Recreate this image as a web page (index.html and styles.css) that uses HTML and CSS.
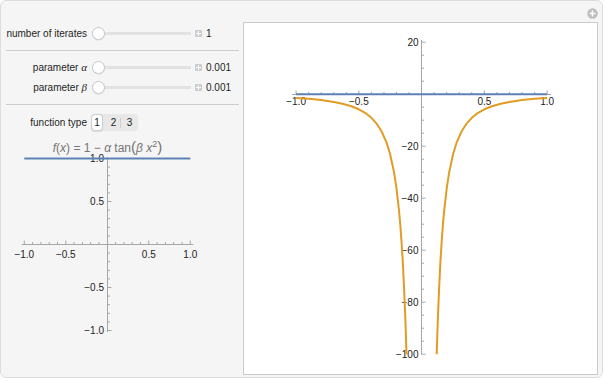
FILE: index.html
```html
<!DOCTYPE html>
<html>
<head>
<meta charset="utf-8">
<link rel="stylesheet" href="styles.css">
</head>
<body>
<div class="panel">
  <svg class="corner-plus" width="11" height="11" viewBox="0 0 11 11"><circle cx="5.5" cy="5.5" r="5.2" fill="#bdbdbd"/><path d="M5.5 2.5v6M2.5 5.5h6" stroke="#fff" stroke-width="1.6"/></svg>
  <div class="left">
    <div class="row r-top">
      <span class="label">number of iterates</span>
      <div class="slider"><span class="thumb"></span></div>
      <span class="pbox"></span>
      <span class="val">1</span>
    </div>
    <div class="sep"></div>
    <div class="row r-a">
      <span class="label">parameter <i class="greek">α</i></span>
      <div class="slider"><span class="thumb"></span></div>
      <span class="pbox"></span>
      <span class="val">0.001</span>
    </div>
    <div class="row">
      <span class="label">parameter <i class="greek">β</i></span>
      <div class="slider"><span class="thumb"></span></div>
      <span class="pbox"></span>
      <span class="val">0.001</span>
    </div>
    <div class="sep sep2"></div>
    <div class="row r-ft">
      <span class="label">function type</span>
      <div class="seg">
        <span class="opt sel">1</span>
        <span class="opt o2">2</span>
        <span class="divider"></span>
        <span class="opt o3">3</span>
      </div>
    </div>
    <div class="formula"><i>f</i>(<i>x</i>) = 1 − <i>α</i> tan<span class="bp">(</span><i>β</i> <i>x</i><sup>2</sup><span class="bp">)</span></div>
    <svg class="plot-left" width="233" height="185" viewBox="0 0 233 185">
      <g stroke="#a6a6a6" stroke-width="1" fill="none">
        <path d="M15.7 87.5H187.3M101.5 0.5V175"/>
        <path d="M18.3 87.5v-4M59.8 87.5v-4M142.8 87.5v-4M184.3 87.5v-4"/>
        <path d="M26.6 87.5v-2.5M34.9 87.5v-2.5M43.2 87.5v-2.5M51.5 87.5v-2.5M68.1 87.5v-2.5M76.4 87.5v-2.5M84.7 87.5v-2.5M93 87.5v-2.5M109.6 87.5v-2.5M117.9 87.5v-2.5M126.2 87.5v-2.5M134.5 87.5v-2.5M151.1 87.5v-2.5M159.4 87.5v-2.5M167.7 87.5v-2.5M176 87.5v-2.5"/>
        <path d="M101.5 1.5h4M101.5 44.5h4M101.5 130.5h4M101.5 173.5h4"/>
        <path d="M101.5 10.1h2.5M101.5 18.7h2.5M101.5 27.3h2.5M101.5 35.9h2.5M101.5 53.1h2.5M101.5 61.7h2.5M101.5 70.3h2.5M101.5 78.9h2.5M101.5 96.1h2.5M101.5 104.7h2.5M101.5 113.3h2.5M101.5 121.9h2.5M101.5 139.1h2.5M101.5 147.7h2.5M101.5 156.3h2.5M101.5 164.9h2.5"/>
      </g>
      <g class="tl" text-anchor="middle">
        <text x="18.3" y="100.5">−1.0</text>
        <text x="59.8" y="100.5">−0.5</text>
        <text x="142.8" y="100.5">0.5</text>
        <text x="184.3" y="100.5">1.0</text>
      </g>
      <g class="tl" text-anchor="end">
        <text x="98" y="5">1.0</text>
        <text x="98" y="48">0.5</text>
        <text x="98" y="134">−0.5</text>
        <text x="98" y="177">−1.0</text>
      </g>
      <path d="M18.3 1.5H184.3" stroke="#5e81b5" stroke-width="1.8" fill="none"/>
    </svg>
  </div>
  <div class="right">
    <svg class="plot-right" width="353" height="351" viewBox="0 0 353 351">
      <g stroke="#a6a6a6" stroke-width="1" fill="none">
        <path d="M48 71.5H307M177.5 17V331.5"/>
        <path d="M52.1 71.5v-4M114.85 71.5v-4M240.35 71.5v-4M303.1 71.5v-4"/>
        <path d="M64.65 71.5v-2.5M77.2 71.5v-2.5M89.75 71.5v-2.5M102.3 71.5v-2.5M127.4 71.5v-2.5M139.95 71.5v-2.5M152.5 71.5v-2.5M165.05 71.5v-2.5M190.15 71.5v-2.5M202.7 71.5v-2.5M215.25 71.5v-2.5M227.8 71.5v-2.5M252.9 71.5v-2.5M265.45 71.5v-2.5M278 71.5v-2.5M290.55 71.5v-2.5"/>
        <path d="M177.5 19.2h4M177.5 123.2h4M177.5 175.2h4M177.5 227.2h4M177.5 279.2h4M177.5 331.2h4"/>
        <path d="M177.5 32.2h2.5M177.5 45.2h2.5M177.5 58.2h2.5M177.5 84.2h2.5M177.5 97.2h2.5M177.5 110.2h2.5M177.5 136.2h2.5M177.5 149.2h2.5M177.5 162.2h2.5M177.5 188.2h2.5M177.5 201.2h2.5M177.5 214.2h2.5M177.5 240.2h2.5M177.5 253.2h2.5M177.5 266.2h2.5M177.5 292.2h2.5M177.5 305.2h2.5M177.5 318.2h2.5"/>
      </g>
      <g class="tl" text-anchor="middle">
        <text x="52.1" y="82.2">−1.0</text>
        <text x="114.85" y="82.2">−0.5</text>
        <text x="240.35" y="82.2">0.5</text>
        <text x="303.1" y="82.2">1.0</text>
      </g>
      <g class="tl" text-anchor="end">
        <text x="174.5" y="22.7">20</text>
        <text x="174.5" y="126.7">−20</text>
        <text x="174.5" y="178.7">−40</text>
        <text x="174.5" y="230.7">−60</text>
        <text x="174.5" y="282.7">−80</text>
        <text x="174.5" y="334.7">−100</text>
      </g>
      <path d="M52.1 71.2H303.1" stroke="#5e81b5" stroke-width="2" fill="none"/>
      <g stroke="#e19c24" stroke-width="2" fill="none" stroke-linejoin="round" stroke-linecap="butt">
        <polyline points="52.1,75 64.65,75.85 77.2,77.1 89.75,78.9 98.5,80.7 107.3,83.2 114.85,86.3 121.1,89.8 127.4,94.8 132.4,100.3 137.4,108 142.5,119.3 146.2,131.5 150,149.1 152.5,165.45 155,187.6 156.3,201.6 157.5,218.5 158.8,238.8 160,263.5 161.3,294.3 161.9,312.5 162.5,331.3"/>
        <polyline points="192.7,331.3 193.3,312.5 193.9,294.3 195.2,263.5 196.4,238.8 197.7,218.5 198.9,201.6 200.2,187.6 202.7,165.45 205.2,149.1 209,131.5 212.7,119.3 217.8,108 222.8,100.3 227.8,94.8 234.1,89.8 240.35,86.3 247.9,83.2 256.7,80.7 265.45,78.9 278,77.1 290.55,75.85 303.1,75"/>
      </g>
    </svg>
  </div>
</div>
</body>
</html>
```

FILE: styles.css
```css
* { box-sizing: border-box; }
html, body { margin: 0; padding: 0; background: #ffffff; }
body {
  font-family: "Liberation Sans", Arial, sans-serif;
  font-size: 10px;
  color: #1e1e1e;
}
.panel {
  position: relative;
  width: 603px;
  height: 378px;
  border: 1px solid #dddddd;
  border-radius: 6px;
  background: #f5f5f5;
  padding: 21px 4px 0 5px;
  display: flex;
  gap: 4px;
}
.corner-plus {
  position: absolute;
  left: 586px;
  top: 7px;
}
.left {
  width: 233px;
  display: flex;
  flex-direction: column;
}
.row {
  display: flex;
  align-items: center;
  height: 20px;
}
.r-top { height: 22px; }
.r-a { margin-top: 6px; }
.label {
  width: 81px;
  text-align: right;
  white-space: nowrap;
}
.greek {
  font-family: "Liberation Serif", "DejaVu Serif", serif;
  font-size: 11px;
}
.slider {
  width: 100px;
  height: 13px;
  margin-left: 4px;
  display: flex;
  align-items: center;
  background: linear-gradient(#e2e2e2, #e2e2e2) 6px center / 94px 3px no-repeat;
}
.thumb {
  width: 13px;
  height: 13px;
  border-radius: 50%;
  background: #ffffff;
  border: 1px solid #cbcbcb;
  box-shadow: 0 0.5px 1px rgba(0, 0, 0, 0.12);
  margin-left: 0.5px;
}
.pbox {
  width: 7px;
  height: 7px;
  margin-left: 4px;
  border-radius: 1px;
  background:
    linear-gradient(#ffffff, #ffffff) center / 5px 1px no-repeat,
    linear-gradient(#ffffff, #ffffff) center / 1px 5px no-repeat,
    #cdcdcd;
}
.val { margin-left: 4px; }
.sep {
  height: 1px;
  background: #cccccc;
  margin-top: 6px;
}
.sep2 { margin-top: 7px; }
.r-ft {
  height: 17px;
  margin-top: 9px;
}
.seg {
  margin-left: 4px;
  display: flex;
  align-items: center;
  height: 17px;
  background: #e8e8e8;
  border-radius: 4px;
}
.opt {
  height: 17px;
  display: flex;
  align-items: center;
  justify-content: center;
}
.opt.sel {
  width: 12px;
  background: #ffffff;
  border: 1px solid #cfcfcf;
  border-radius: 4px;
  box-shadow: 0 0.5px 1px rgba(0, 0, 0, 0.1);
}
.o2 { width: 17px; padding-left: 4px; }
.o3 { width: 17px; }
.divider {
  width: 1px;
  height: 10px;
  background: #cfcfcf;
}
.formula {
  margin-top: 9px;
  height: 13px;
  line-height: 13px;
  text-align: center;
  padding-right: 30px;
  font-size: 12px;
  color: #767676;
  white-space: nowrap;
}
.formula i { font-style: italic; }
.formula sup { font-size: 9px; line-height: 0; vertical-align: 5px; }
.formula .bp { font-size: 15px; }
.plot-left { display: block; overflow: visible; margin-top: 4px; }
.tl text {
  font-family: "Liberation Sans", Arial, sans-serif;
  font-size: 10px;
  fill: #222222;
}
.right {
  width: 355px;
  height: 353px;
  border: 1px solid #cbcbcb;
  background: #ffffff;
}
.plot-right { display: block; }
```
